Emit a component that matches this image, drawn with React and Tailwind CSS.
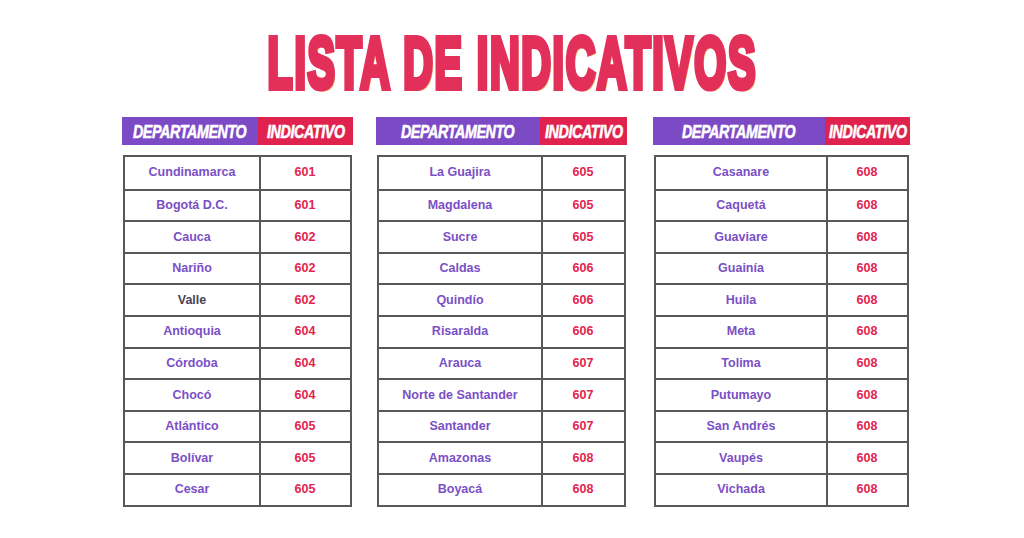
import React from "react";

const TABLES = [
  {
    w: "w-[231px]",
    col: "w-[136px]",
    rows: [
      ["Cundinamarca", "601"],
      ["Bogotá D.C.", "601"],
      ["Cauca", "602"],
      ["Nariño", "602"],
      ["Valle", "602", true],
      ["Antioquia", "604"],
      ["Córdoba", "604"],
      ["Chocó", "604"],
      ["Atlántico", "605"],
      ["Bolívar", "605"],
      ["Cesar", "605"],
    ],
  },
  {
    w: "w-[251px]",
    col: "w-[164px]",
    rows: [
      ["La Guajira", "605"],
      ["Magdalena", "605"],
      ["Sucre", "605"],
      ["Caldas", "606"],
      ["Quindío", "606"],
      ["Risaralda", "606"],
      ["Arauca", "607"],
      ["Norte de Santander", "607"],
      ["Santander", "607"],
      ["Amazonas", "608"],
      ["Boyacá", "608"],
    ],
  },
  {
    w: "w-[257px]",
    col: "w-[172px]",
    rows: [
      ["Casanare", "608"],
      ["Caquetá", "608"],
      ["Guaviare", "608"],
      ["Guainía", "608"],
      ["Huila", "608"],
      ["Meta", "608"],
      ["Tolima", "608"],
      ["Putumayo", "608"],
      ["San Andrés", "608"],
      ["Vaupés", "608"],
      ["Vichada", "608"],
    ],
  },
];

// header label is squeezed with scale-x, so the box is wider than what shows
const HeadLabel = ({ children }) => (
  <span className="inline-block scale-x-[0.75] italic font-bold text-white text-[19px] leading-none tracking-tight whitespace-nowrap [-webkit-text-stroke:0.6px_#ffffff]">
    {children}
  </span>
);

const Table = ({ t }) => (
  <div className={`${t.w} shrink-0`}>
    <div className="flex h-[28px]">
      <div className={`${t.col} shrink-0 min-w-0 bg-[#7d4ac6] flex items-center justify-center`}>
        <HeadLabel>DEPARTAMENTO</HeadLabel>
      </div>
      <div className="flex-1 min-w-0 bg-[#e0234e] flex items-center justify-center">
        <HeadLabel>INDICATIVO</HeadLabel>
      </div>
    </div>
    <div className="mt-[10px] mx-[1px] border-2 border-[#585858] bg-white">
      {t.rows.map(([name, code, dark], i) => (
        <div
          key={name}
          className={`flex h-[31.6px] ${i > 0 ? "border-t-2 border-[#585858]" : ""}`}
        >
          <div
            className={`${t.col} shrink-0 -mr-[1px] border-r-2 border-[#585858] flex items-center justify-center text-[12.5px] font-bold ${
              dark ? "text-[#4a4458]" : "text-[#7b4fc6]"
            }`}
          >
            {name}
          </div>
          <div className="flex-1 flex items-center justify-center text-[12.5px] font-bold text-[#e3244f]">
            {code}
          </div>
        </div>
      ))}
    </div>
  </div>
);

export default function App() {
  return (
    <div
      className="w-[1024px] h-[538px] bg-white overflow-hidden"
      style={{ fontFamily: '"Liberation Sans", Arial, sans-serif' }}
    >
      <div className="h-[117px] flex justify-center pt-[27px]">
        <h1 className="inline-block scale-x-[0.57] origin-center text-[72px] leading-none font-bold text-[#e2305a] whitespace-nowrap tracking-[3px] [-webkit-text-stroke:6px_#e2305a] [text-shadow:3px_3px_0_#f7b76c]">
          LISTA DE INDICATIVOS
        </h1>
      </div>
      <div className="flex pl-[122px] gap-[23px]">
        <Table t={TABLES[0]} />
        <Table t={TABLES[1]} />
        <div className="ml-[3px]">
          <Table t={TABLES[2]} />
        </div>
      </div>
    </div>
  );
}
